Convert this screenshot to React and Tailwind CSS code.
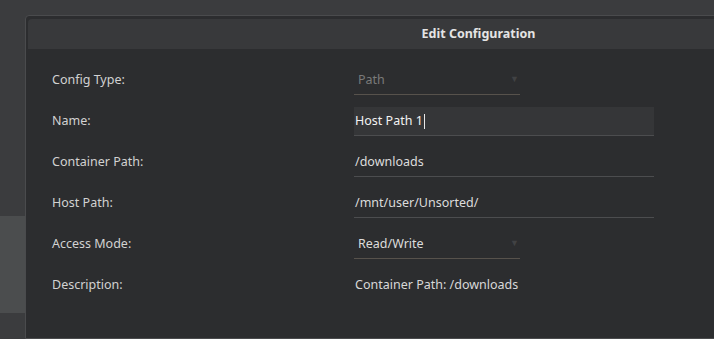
import React from "react";

const rows = [
  { label: "Config Type:", kind: "select", value: "Path", dim: true },
  { label: "Name:", kind: "input", value: "Host Path 1", focus: true },
  { label: "Container Path:", kind: "input", value: "/downloads" },
  { label: "Host Path:", kind: "input", value: "/mnt/user/Unsorted/" },
  { label: "Access Mode:", kind: "select", value: "Read/Write" },
  { label: "Description:", kind: "text", value: "Container Path: /downloads" },
];

function Field({ row }) {
  if (row.kind === "select") {
    return (
      <div className="flex h-[29px] w-[166px] items-center justify-between border-b border-[#57524c] pl-[4px] pr-[1px]">
        <span className={row.dim ? "text-[#7a7a7a]" : "text-[#dcdcdc]"}>{row.value}</span>
        <span className="mb-[3px] text-[9px] leading-none text-[#414244]">▼</span>
      </div>
    );
  }
  if (row.kind === "input") {
    return (
      <div
        className={
          "flex h-[29px] w-[300px] items-center border-b border-[#4c4d4f] pl-[1px] text-[#dcdcdc] " +
          (row.focus ? "bg-[#353638] text-[#f2f2f2]" : "")
        }
      >
        <span>{row.value}</span>
        {row.focus ? <span className="ml-[1px] h-[15px] w-px bg-[#e8e8e8]" /> : null}
      </div>
    );
  }
  return <div className="pl-[1px] text-[#d8d8d8]">{row.value}</div>;
}

export default function App() {
  return (
    <div
      className="flex h-[339px] w-[714px] overflow-hidden bg-[#3b3c3e] text-[12.5px]"
      style={{ fontFamily: '"Noto Sans", "Open Sans", sans-serif' }}
    >
      <div className="w-[25px] shrink-0">
        <div className="mt-[216px] h-[97px] bg-[#4b4d4e]" />
      </div>
      <div className="mt-[15px] w-[905px] shrink-0 rounded-tl-[4px] border border-[#4a4b4d] bg-[#2c2d2f] pl-[2px] pt-[3px]">
        <div className="flex h-[30px] items-center justify-center rounded-tl-[4px] bg-[#38393b] font-bold text-[#e4e4e4]">
          Edit Configuration
        </div>
        <div className="pt-[11px] pl-[24px]">
          {rows.map((row) => (
            <div key={row.label} className="flex h-[41px] items-center">
              <div className="w-[302px] text-[#d2d2d2]">{row.label}</div>
              <Field row={row} />
            </div>
          ))}
        </div>
      </div>
    </div>
  );
}
